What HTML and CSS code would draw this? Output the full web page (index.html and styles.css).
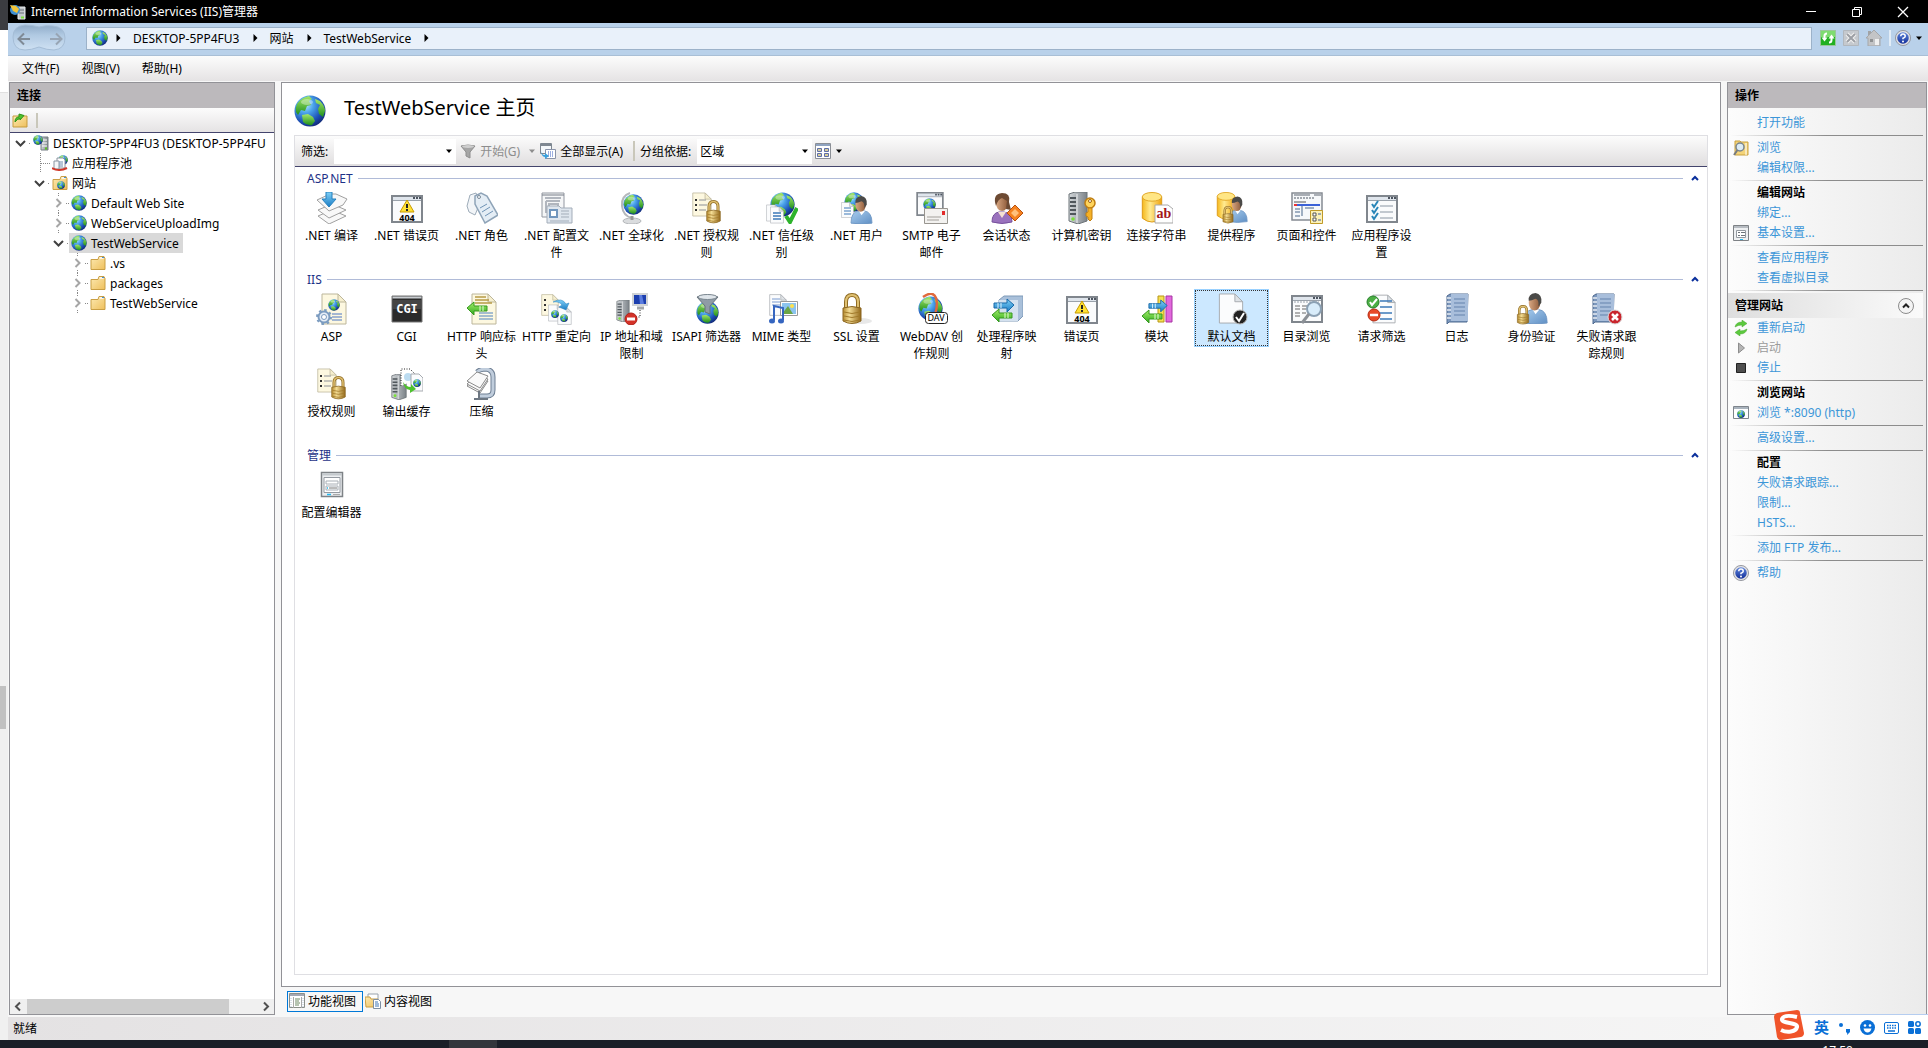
FILE: index.html
```
<!DOCTYPE html>
<html lang="zh-CN">
<head>
    <meta charset="utf-8">
    <meta name="viewport" content="width=device-width, initial-scale=1.0">
    <title>Internet Information Services (IIS)管理器</title>
    <link rel="stylesheet" href="styles.css">
</head>
<body>
    <!-- 图标库 -->
    <svg class="sprite" width="0" height="0" aria-hidden="true">
        <defs>
            <radialGradient id="gGlobe" cx="0.35" cy="0.3" r="0.75"><stop offset="0" stop-color="#b5e8ff"/><stop offset="0.35" stop-color="#4aa3ea"/><stop offset="0.75" stop-color="#1c4fb4"/><stop offset="1" stop-color="#122a78"/></radialGradient>
            <linearGradient id="gLand" x1="0" y1="0" x2="0" y2="1"><stop offset="0" stop-color="#a5e86a"/><stop offset="1" stop-color="#1f8f1c"/></linearGradient>
            <linearGradient id="gGold" x1="0" y1="0" x2="1" y2="0"><stop offset="0" stop-color="#b58a2e"/><stop offset="0.35" stop-color="#f3dc94"/><stop offset="1" stop-color="#94691a"/></linearGradient>
            <linearGradient id="gYellow" x1="0" y1="0" x2="1" y2="0"><stop offset="0" stop-color="#f5b81c"/><stop offset="0.4" stop-color="#ffeb92"/><stop offset="1" stop-color="#f0a30c"/></linearGradient>
            <linearGradient id="gGray" x1="0" y1="0" x2="1" y2="0"><stop offset="0" stop-color="#d3d7da"/><stop offset="1" stop-color="#7b8288"/></linearGradient>
            <linearGradient id="gBlue" x1="0" y1="0" x2="0" y2="1"><stop offset="0" stop-color="#7fd0f7"/><stop offset="1" stop-color="#1a7cc4"/></linearGradient>
            <linearGradient id="gGreen" x1="0" y1="0" x2="0" y2="1"><stop offset="0" stop-color="#a6ef6a"/><stop offset="1" stop-color="#2fa91e"/></linearGradient>
            <linearGradient id="gFolder" x1="0" y1="0" x2="1" y2="1"><stop offset="0" stop-color="#fdeab2"/><stop offset="1" stop-color="#eebf5c"/></linearGradient>
            <linearGradient id="gBody" x1="0" y1="0" x2="1" y2="1"><stop offset="0" stop-color="#a9cdee"/><stop offset="1" stop-color="#5f8fc4"/></linearGradient>
            <linearGradient id="gHead" x1="0" y1="0" x2="1" y2="0"><stop offset="0" stop-color="#d9a883"/><stop offset="1" stop-color="#8d5a39"/></linearGradient>
            <linearGradient id="gPad" x1="0" y1="0" x2="0" y2="1"><stop offset="0" stop-color="#8fabc8"/><stop offset="0.4" stop-color="#b0c9e2"/><stop offset="1" stop-color="#cfe1f3"/></linearGradient>
            <linearGradient id="gHelp" x1="0" y1="0" x2="0" y2="1"><stop offset="0" stop-color="#5f86dc"/><stop offset="1" stop-color="#132f9a"/></linearGradient>
        </defs>

        <!-- 基础图形 -->
        <symbol id="globe" viewBox="0 0 32 32">
            <circle cx="16" cy="16" r="15.5" fill="url(#gGlobe)"/>
            <path d="M3 9Q8 2 15 1l3 3-3 2 2 4-4 1-2 5-4-1-3 5-2-3q-1-4 1-8z" fill="url(#gLand)"/>
            <path d="M21 4l5 2q5 5 5 10l-2 6-4-3-1-5 2-4-4-2z" fill="url(#gLand)"/>
            <path d="M8 20l6-1 5 3 2 4-3 4q-5 1-9-3z" fill="url(#gLand)"/>
            <ellipse cx="13" cy="7" rx="6" ry="3" fill="#fff" opacity=".35"/>
        </symbol>
        <symbol id="doc" viewBox="0 0 26 32">
            <path d="M1 1h16l8 8v22H1z" fill="#fbfcfd" stroke="#a7abb0"/>
            <path d="M17 1v8h8z" fill="#dfe3e7" stroke="#a7abb0"/>
        </symbol>
        <symbol id="note" viewBox="0 0 26 32">
            <path d="M1 1h16l8 8v22H1z" fill="#fdf8e0" stroke="#bcb69b"/>
            <path d="M17 1v8h8z" fill="#f6efcf" stroke="#bcb69b"/>
        </symbol>
        <symbol id="lock" viewBox="0 0 20 32">
            <path d="M4 17V9q0-7 6-7t6 7v8" fill="none" stroke="#8f6b22" stroke-width="4"/>
            <path d="M4 17V9q0-7 6-7t6 7v8" fill="none" stroke="#dfc071" stroke-width="2"/>
            <path d="M1 15q9-3 18 0v13q-9 5-18 0z" fill="url(#gGold)" stroke="#8a6520"/>
            <path d="M2 19q8 3 16 0M2 23q8 3 16 0M2 27q8 3 16 0" fill="none" stroke="#a17a2b"/>
        </symbol>
        <symbol id="server" viewBox="0 0 20 32">
            <path d="M1 2l6-2h12v29l-9 3-9-3z" fill="url(#gGray)" stroke="#6d7478"/>
            <path d="M9 2v29" stroke="#eef0f1"/>
            <path d="M2 6h6M2 10h6M2 14h6M2 18h6M2 22h6" stroke="#50575c" stroke-width="2"/>
            <circle cx="5" cy="27" r="1.8" fill="#7be03a"/>
        </symbol>
        <symbol id="user" viewBox="0 0 26 32">
            <path d="M1 31q0-13 9-14h6q9 1 9 14-12 2-24 0z" fill="url(#gBody)" stroke="#6f97c4"/>
            <path d="M10 17l3 5 4-5z" fill="#fff"/>
            <ellipse cx="12" cy="10" rx="6" ry="8" fill="url(#gHead)"/>
            <path d="M6 8q-1-7 7-8 7 1 6 10l-3 4q1-7-3-8-4 2-7 2z" fill="#4b4a48"/>
        </symbol>
        <symbol id="win" viewBox="0 0 32 28">
            <path d="M1 1h30v26H1z" fill="#fafbfc" stroke="#80868d" stroke-width="2"/>
            <path d="M2 2h28v3H2z" fill="#dfe5ec"/>
            <path d="M2 5.500h28" stroke="#9aa2ab"/>
            <path d="M22 3h2M25 3h2M28 3h2" stroke="#4d5560" stroke-width="2"/>
        </symbol>
        <symbol id="cyl" viewBox="0 0 22 32">
            <path d="M1 5v22q10 8 20 0V5z" fill="url(#gYellow)" stroke="#dd9a16"/>
            <ellipse cx="11" cy="5" rx="10" ry="4.500" fill="#ffe685" stroke="#e0a524"/>
        </symbol>
        <symbol id="larrow" viewBox="0 0 22 14"><path d="M1 7l7-6v4h13v5H8v4z" fill="url(#gGreen)" stroke="#36991f"/><path d="M14 5v5M17 5v5" stroke="#e6ffd8"/></symbol>
        <symbol id="rarrow" viewBox="0 0 22 14"><path d="M21 7l-7-6v4H1v5h13v4z" fill="url(#gBlue)" stroke="#1769a8"/><path d="M5 5v5M8 5v5" stroke="#e2f4ff"/></symbol>
        <symbol id="folder" viewBox="0 0 16 16">
            <path d="M1 4.500h7l1-3h5l1 2v11H1z" fill="url(#gFolder)" stroke="#c99f45"/>
            <path d="M9.500 3h4" stroke="#fff" stroke-width="1.500"/><path d="M12 2.500h2" stroke="#3f8fd8"/>
        </symbol>
        <symbol id="help" viewBox="0 0 18 18">
            <circle cx="9" cy="9" r="8.500" fill="#e1e1e4" stroke="#8d8f98"/>
            <circle cx="9" cy="9" r="6.500" fill="url(#gHelp)"/>
            <path d="M6.500 7q0-2.500 2.500-2.500T11.500 7Q11.500 8.200 9 9.300V10.500" fill="none" stroke="#fff" stroke-width="1.700"/><circle cx="9" cy="13" r="1.100" fill="#fff"/>
        </symbol>
        <symbol id="caret" viewBox="0 0 8 8"><path d="M1 2.500h6L4 6z" fill="currentColor"/></symbol>
        <symbol id="next" viewBox="0 0 8 8"><path d="M2.500 0v8L6.500 4z" fill="#000"/></symbol>
        <symbol id="up" viewBox="0 0 8 8"><path d="M1 6l3-3 3 3" fill="none" stroke="#0a2f9c" stroke-width="2"/></symbol>

        <!-- 树节点 -->
        <symbol id="tw-open" viewBox="0 0 21 20"><path d="M6 8l4.500 4.500L15 8" fill="none" stroke="#404040" stroke-width="2"/><path d="M19 10.500h2" stroke="#888" stroke-dasharray="1 1"/></symbol>
        <symbol id="tw-closed" viewBox="0 0 21 20"><path d="M8.500 6l4 4-4 4" fill="none" stroke="#a6a6a6" stroke-width="2"/><path d="M10.500 0v3M10.500 17v3M18 10.500h3" stroke="#888" stroke-dasharray="1 1"/></symbol>
        <symbol id="tw-leaf" viewBox="0 0 21 20"><path d="M11.500 0v20M12 10.500h9" stroke="#888" stroke-dasharray="1 1"/></symbol>

        <!-- 16px 图标 -->
        <symbol id="s-server" viewBox="0 0 16 16"><path d="M8 2h7v13H8z" fill="url(#gGray)" stroke="#777f84"/><path d="M9 5h5M9 8h5M9 11h5" stroke="#fff"/><path d="M12 13.500h2" stroke="#58c322" stroke-width="2"/><use href="#globe" x="0" y="0" width="10" height="10"/></symbol>
        <symbol id="s-iis" viewBox="0 0 16 16"><path d="M8 3h7v12H8z" fill="#c3c8cb" stroke="#e9ecee"/><path d="M9 6h5M9 9h5" stroke="#687076"/><path d="M11 13.500h3" stroke="#7be03a" stroke-width="2"/><circle cx="5" cy="6" r="5" fill="#3f8fd2"/><path d="M0 1l6 1 3 3-2 4-4-2z" fill="#f2c53b"/></symbol>
        <symbol id="s-pool" viewBox="0 0 16 16"><use href="#globe" x="6" y="0" width="10" height="10"/><path d="M5 3h6l2 2v8H5z" fill="#fff" stroke="#8a94a0"/><path d="M2 6h5v8H2z" fill="#f4f6f8" stroke="#8a94a0"/><path d="M7 7h4M7 9h4M7 11h4" stroke="#6d8cae"/><path d="M0 13q7 4 15 0" fill="none" stroke="#d0392b" stroke-width="2"/></symbol>
        <symbol id="s-sites" viewBox="0 0 16 16"><use href="#folder" width="16" height="16"/><use href="#globe" x="5" y="6" width="8" height="8"/></symbol>
        <symbol id="s-conn" viewBox="0 0 16 16"><path d="M1 4h14v11H1z" fill="url(#gFolder)" stroke="#c59b3f"/><path d="M3 10q0-5 4-5V2l5 1.500L8 8V6.500Q5 7 3 10z" fill="#4fc22e" stroke="#2e9417"/></symbol>
        <symbol id="s-filter" viewBox="0 0 16 16"><path d="M1 3q7-2 14 0L10 9v6l-4-2V9z" fill="#a5a5a5" stroke="#8d8d8d"/><ellipse cx="8" cy="3.500" rx="6" ry="1.500" fill="#cfcfcf"/></symbol>
        <symbol id="s-all" viewBox="0 0 16 16"><path d="M.5.500h11v10H.5z" fill="#f4f7fa" stroke="#7e8791"/><path d="M1 2h10" stroke="#7e8791" stroke-width="2"/><path d="M5.500 6.500h10v9h-10z" fill="#fff" stroke="#8a93a8"/><path d="M8 9h6M8 11h6M8 13h6" stroke="#3b5fc2" stroke-dasharray="1 1"/><path d="M1 7q0 5 4 5v-2l4 3-4 3v-2q-4 0-4-7z" fill="#3aa0dc"/></symbol>
        <symbol id="s-view" viewBox="0 0 16 16"><path d="M.5.500h15v15H.5z" fill="#fff" stroke="#8b8f96"/><path d="M1 2h14" stroke="#8fa3c0" stroke-width="2"/><path d="M2.500 5.500h4v3h-4zM9.500 5.500h4v3h-4zM2.500 10.500h4v3h-4zM9.500 10.500h4v3h-4z" fill="#d8cf9a" stroke="#5e6ea8"/></symbol>
        <symbol id="s-refresh" viewBox="0 0 16 16"><path d="M.5.500h15v15H.5z" fill="#22b022" stroke="#9ac79a"/><path d="M1 1h14v6H1z" fill="#7fdc71"/><path d="M7 3.500Q4.500 3.500 4.500 6v2M9 12.500q2.500 0 2.500-2.500V8" fill="none" stroke="#fff" stroke-width="2"/><path d="M1.500 7.500h6l-3 4zM8.500 8.500h6l-3-4z" fill="#fff"/></symbol>
        <symbol id="s-stop" viewBox="0 0 16 16"><path d="M.5.500h15v15H.5z" fill="#c5c9ce" stroke="#b2b7bd"/><path d="M4 4l8 8M12 4l-8 8" stroke="#f1f1f1" stroke-width="4"/><path d="M4 4l8 8M12 4l-8 8" stroke="#9c9fa5" stroke-width="2"/></symbol>
        <symbol id="s-home" viewBox="0 0 16 16"><path d="M2 1h3v5H2z" fill="#a1a3a5"/><path d="M8 0l8 8h-2v8H2V8H0z" fill="#c3c4c6" stroke="#a5a7aa"/><path d="M9 9h4v6H9z" fill="#f0f0f0"/><path d="M4 9h3v3H4z" fill="#8e9092"/></symbol>
        <symbol id="s-browse" viewBox="0 0 16 16"><path d="M2 1h5l1 1h7v13H2z" fill="#f4d479" stroke="#c9a13f"/><path d="M13 3v12" stroke="#fff"/><circle cx="7" cy="7" r="4" fill="#dcecf5" stroke="#7a858d" stroke-width="1.500"/><path d="M4.500 10L1 15" stroke="#767b80" stroke-width="2"/></symbol>
        <symbol id="s-basic" viewBox="0 0 16 16"><path d="M.5.500h15v15H.5z" fill="#eef0f2" stroke="#7e8286"/><path d="M1 2h14" stroke="#b7bcc2" stroke-width="2"/><path d="M3.500 5.500h9v7h-9z" fill="#fff" stroke="#949aa1"/><path d="M5 7.500h2M5 10.500h2M8 7.500h4M8 10.500h4" stroke="#6d747b"/><path d="M7 14.500h3" stroke="#22b9f0"/></symbol>
        <symbol id="s-restart" viewBox="0 0 16 16"><path d="M2 7q1-5 7-5V0l5 3.500L9 7V5Q5 5 2 7zM14 9q-1 5-7 5v2l-5-3.500L7 9v2q4 0 7-2z" fill="#5cc93e" stroke="#48a92e" stroke-width=".5"/></symbol>
        <symbol id="s-play" viewBox="0 0 16 16"><path d="M5.500 3l6 5-6 5z" fill="#b5b5b5" stroke="#8d8d8d"/></symbol>
        <symbol id="s-square" viewBox="0 0 16 16"><path d="M3.500 3.500h9v9h-9z" fill="#4e4e4e" stroke="#222"/></symbol>
        <symbol id="s-site" viewBox="0 0 16 16"><path d="M.5 1.500h15v12H.5z" fill="#fff" stroke="#7e858c"/><path d="M1 3h14" stroke="#a9b3bd" stroke-width="2"/><use href="#globe" x="4" y="5" width="8" height="8"/></symbol>
        <symbol id="s-feat" viewBox="0 0 16 16"><path d="M.5.500h15v14H.5z" fill="#fff" stroke="#8a8f8a"/><path d="M1 2h14" stroke="#a4a8b3" stroke-width="2"/><path d="M4.500 4v11M12.500 4v11" stroke="#a9a9a9"/><path d="M6 6h5M6 8h4M6 10h5M6 12h4" stroke="#6e8a64"/><path d="M2 5v9M14 5v9" stroke="#b5c4d8" stroke-dasharray="1 1"/></symbol>
        <symbol id="s-cont" viewBox="0 0 16 16"><path d="M3 1h10v8H3z" fill="#fff" stroke="#98a2ad"/><path d="M0 4h5l1 2h7v8H1z" fill="url(#gFolder)" stroke="#c99f45"/><path d="M8.500 6.500h5l2 2v7h-7z" fill="#fff" stroke="#7e8fa3"/><path d="M10 9h3M10 11h4M10 13h4" stroke="#3f77b8"/></symbol>

        <!-- 功能图标 -->
        <symbol id="i-compile" viewBox="0 0 32 32"><g fill="#f8f8f8" stroke="#a0a0a0"><path d="M2 24l14-6 14 6-17 8z"/><path d="M2 18l14-6 14 6-17 8z"/><path d="M1 8l13-6h6l11 5-4 6-14 6z"/></g><path d="M10 0h6v7h4l-7 8-7-8h4z" fill="url(#gBlue)" stroke="#2580be"/></symbol>
        <symbol id="i-warn" viewBox="0 0 32 32"><use href="#win" x="0" y="3" width="32" height="28"/><path d="M16 8l7 12H9z" fill="#ffe135" stroke="#c79a00"/><path d="M16 12v4M16 17v2" stroke="#222" stroke-width="2"/></symbol>
        <symbol id="i-role" viewBox="0 0 32 32"><path d="M4 3l6-2 4 10-5 12-6-3-2-6z" fill="#f2f5f8" stroke="#9eacb9"/><path d="M9 4l6-3 6 3 11 19-13 8L9 12z" fill="#e4edf5" stroke="#8fa4b8" stroke-width="1.500"/><circle cx="13" cy="5" r="1.500" fill="#fff" stroke="#7a8a99"/><path d="M14 16l7-4M16 20l8-5M19 24l8-5" stroke="#6f93b5"/></symbol>
        <symbol id="i-config" viewBox="0 0 32 32"><path d="M1 1h22v24H1z" fill="#f5f6f7" stroke="#9297a0"/><path d="M1 3h22" stroke="#777d87"/><path d="M4 6h16M5 9h14M5 9v12M8 12h9v9H8z" fill="none" stroke="#b1b6be" stroke-width="2"/><path d="M6 14h12l2 2h11v15H6z" fill="#dfe6ee" stroke="#a3adb9"/><path d="M9 18h7v7H9z" fill="#fff" stroke="#7196bd" stroke-width="2"/><path d="M20 19h8M20 22h8M20 25h8M9 29h19" stroke="#a3adb9"/></symbol>
        <symbol id="i-intl" viewBox="0 0 32 32"><path d="M14 1Q5 4 6 14t10 12" fill="none" stroke="#b5b8bb" stroke-width="2"/><ellipse cx="16" cy="29" rx="9" ry="3" fill="#dadcde" stroke="#b4b7ba"/><path d="M16 24v4" stroke="#999" stroke-width="3"/><use href="#globe" x="7" y="2" width="21" height="21"/></symbol>
        <symbol id="i-auth" viewBox="0 0 32 32"><use href="#note" x="1" y="0" width="20" height="25"/><path d="M4 8h2M4 13h2M4 18h2" stroke="#333" stroke-width="2"/><path d="M8 8h7M8 13h8M8 18h7" stroke="#8d9096"/><use href="#lock" x="15" y="8" width="15" height="24"/></symbol>
        <symbol id="i-trust" viewBox="0 0 32 32"><use href="#globe" x="4" y="0" width="25" height="25"/><use href="#doc" x="0" y="12" width="14" height="18"/><use href="#doc" x="4" y="14" width="14" height="18"/><path d="M7 21h8M7 24h8M7 27h8" stroke="#3d78b8" stroke-width="1.500"/><path d="M20 24l4 6 7-14" fill="none" stroke="#2db32b" stroke-width="4"/></symbol>
        <symbol id="i-netuser" viewBox="0 0 32 32"><use href="#globe" x="3" y="0" width="20" height="20"/><use href="#doc" x="0" y="9" width="13" height="18"/><path d="M3 16h7M3 19h7M3 22h7" stroke="#3d78b8"/><use href="#user" x="9" y="4" width="23" height="28"/></symbol>
        <symbol id="i-smtp" viewBox="0 0 32 32"><use href="#win" x="0" y="0" width="28" height="24"/><use href="#globe" x="7" y="6" width="13" height="13"/><path d="M8.500 16.500h23v15h-23z" fill="#f3f2f0" stroke="#98958f"/><path d="M26 19h3v4h-3z" fill="#e22b2b"/><path d="M11 25h14M11 28h12" stroke="#a3a09b"/></symbol>
        <symbol id="i-session" viewBox="0 0 32 32"><path d="M1 30q0-9 7-10h5q8 1 8 10-10 3-20 0z" fill="#9a72bd" stroke="#77519c"/><path d="M7 20l4 6 4-6z" fill="#f5e1d2"/><ellipse cx="11" cy="11" rx="6" ry="8" fill="url(#gHead)"/><path d="M5 14Q1 2 11 1q9 0 7 9l2 8-5-1 1-8-5-3q-4 1-6 8z" fill="#6d4a33"/><path d="M24 13l8 8-8 8-8-8z" fill="#f58220" stroke="#b9500c"/><path d="M24 17l4 4-4 4-4-4z" fill="#ffc17c"/></symbol>
        <symbol id="i-key" viewBox="0 0 32 32"><use href="#server" x="2" y="0" width="20" height="32"/><circle cx="24" cy="11" r="5" fill="#ffd45c" stroke="#c07e12" stroke-width="1.500"/><circle cx="24" cy="9" r="1.500" fill="#fff" stroke="#9d6410"/><path d="M22 16h4v11l-2 2-2-2v-2l-2-1v-3l2-1z" fill="#f5b126" stroke="#c07e12"/></symbol>
        <symbol id="i-provider" viewBox="0 0 32 32"><use href="#cyl" x="0" y="0" width="20" height="28"/><use href="#user" x="11" y="4" width="21" height="27"/><use href="#lock" x="6" y="14" width="12" height="18"/></symbol>
        <symbol id="i-pages" viewBox="0 0 32 32"><path d="M1 1h30v27H1z" fill="#f6f8fa" stroke="#858b93" stroke-width="1.500"/><path d="M3 3h16M23 3h7" stroke="#5c6470"/><path d="M3 6h20" stroke="#a3a9b0" stroke-dasharray="2 1" stroke-width="2"/><path d="M3 10h12" stroke="#555"/><path d="M3 13h26" stroke="#3b62d8" stroke-width="2"/><path d="M3 13h3" stroke="#e33" stroke-width="2"/><path d="M4 17h5M4 20h5M4 24h5M11 14v10M14 16h9" stroke="#8296b0" stroke-width="1.500"/><path d="M19.500 18.500h12v13h-12z" fill="#fbf1b8" stroke="#c09a28"/><path d="M22 21h3v3h-3zM22 26h3v3h-3z" fill="#fff" stroke="#555"/><path d="M27 22h3M27 28h3" stroke="#3f5b9c"/></symbol>
        <symbol id="i-appset" viewBox="0 0 32 32"><use href="#win" x="0" y="3" width="32" height="28"/><g fill="none" stroke="#2b86b8" stroke-width="2"><path d="M6 12l2 3 4-6M6 18l2 3 4-6M6 24l2 3 4-6"/></g><path d="M14 14h13M14 20h13M14 26h13" stroke="#8a96a3"/></symbol>
        <symbol id="i-asp" viewBox="0 0 32 32"><use href="#note" x="5" y="0" width="26" height="32"/><use href="#globe" x="12" y="6" width="12" height="12"/><path d="M16 21h10M16 24h10M16 27h10" stroke="#4d77c4"/><circle cx="8" cy="24" r="5.500" fill="#e6eef7" stroke="#7c9cc0" stroke-width="2"/><circle cx="8" cy="24" r="7" fill="none" stroke="#7c9cc0" stroke-width="2" stroke-dasharray="2.500 3"/><circle cx="8" cy="24" r="2.500" fill="#fff" stroke="#7c9cc0"/></symbol>
        <symbol id="i-header" viewBox="0 0 32 32"><use href="#note" x="5" y="0" width="26" height="32"/><path d="M9 4h11M9 7h14M9 10h17" stroke="#b79b45" stroke-width="1.500"/><path d="M13 20h14M13 23h14M13 26h14" stroke="#4f82c0"/><use href="#larrow" x="0" y="8" width="22" height="14"/></symbol>
        <symbol id="i-redirect" viewBox="0 0 32 32"><use href="#note" x="0" y="0" width="18" height="24"/><path d="M3 7h2M3 12h2M3 17h2" stroke="#333" stroke-width="2"/><use href="#doc" x="7" y="11" width="14" height="18"/><use href="#doc" x="16" y="14" width="15" height="18"/><use href="#globe" x="10" y="17" width="8" height="8"/><use href="#globe" x="19" y="21" width="8" height="8"/><path d="M12 9q9-5 13 2l3-1-3 7-7-3 3-2q-3-4-9-3z" fill="url(#gBlue)" stroke="#2580be" stroke-width=".5"/></symbol>
        <symbol id="i-ip" viewBox="0 0 32 32"><use href="#server" x="0" y="7" width="14" height="22"/><path d="M17 1h14v11H17z" fill="#1c3fae" stroke="#d0d3d6" stroke-width="2"/><path d="M23 2h3l2 9h-4z" fill="#5a7cdf"/><path d="M21 15h7" stroke="#a2a6aa" stroke-width="3"/><path d="M24 17v7h-5" fill="none" stroke="#222" stroke-dasharray="1 1.500"/><circle cx="15" cy="26" r="6" fill="#d43228" stroke="#b01f18"/><path d="M11 26h8" stroke="#fff" stroke-width="3"/></symbol>
        <symbol id="i-isapi" viewBox="0 0 32 32"><use href="#globe" x="5" y="8" width="23" height="23"/><path d="M6 4q10-4 21 0l-8 9v8l-5-2v-6z" fill="#8f9ba5" stroke="#66717a"/><ellipse cx="16.500" cy="4" rx="9.500" ry="2.500" fill="#dfe5ea" stroke="#7b8790"/></symbol>
        <symbol id="i-mime" viewBox="0 0 32 32"><use href="#doc" x="3" y="0" width="18" height="24"/><path d="M6 6h8M6 9h10M6 12h10" stroke="#7b9bd0"/><path d="M14.500 8.500h17v14h-17z" fill="#fff" stroke="#999"/><path d="M16 10h14v11H16z" fill="#8cc4ee"/><path d="M16 21l6-8 5 8z" fill="#6ba545"/><circle cx="26" cy="13" r="2" fill="#ffe14a"/><path d="M8 27V13l9 2v12" fill="none" stroke="#3565c0" stroke-width="2"/><ellipse cx="6" cy="28" rx="3" ry="2.500" fill="#3565c0"/><ellipse cx="15" cy="28" rx="3" ry="2.500" fill="#3565c0"/></symbol>
        <symbol id="i-ssl" viewBox="0 0 32 32"><ellipse cx="20" cy="28" rx="11" ry="3" fill="#e8e8e8"/><use href="#lock" x="1" y="0" width="20" height="32"/></symbol>
        <symbol id="i-handler" viewBox="0 0 32 32"><path d="M8 7l5-4h19v20l-5 5H8z" fill="#a9c0da" stroke="#7f9ab8"/><path d="M8 7h19v21H8z" fill="#d4e1ef"/><use href="#rarrow" x="2" y="5" width="22" height="14"/><use href="#larrow" x="0" y="15" width="22" height="14"/></symbol>
        <symbol id="i-module" viewBox="0 0 32 32"><path d="M17 3h6v26h-6z" fill="#f6df52" stroke="#b69717"/><path d="M25 3h6v26h-6z" fill="#e268dd" stroke="#a734a3"/><use href="#rarrow" x="7" y="6" width="20" height="13"/><use href="#larrow" x="0" y="16" width="22" height="14"/></symbol>
        <symbol id="i-default" viewBox="0 0 32 32"><use href="#doc" x="2" y="0" width="26" height="31"/><circle cx="24" cy="24" r="7" fill="#222" stroke="#b8b8b8"/><path d="M20 24l3 4 5-8" fill="none" stroke="#fff" stroke-width="2"/></symbol>
        <symbol id="i-browse" viewBox="0 0 32 32"><use href="#win" x="0" y="2" width="32" height="28"/><path d="M3 9h25" stroke="#9aa2ab" stroke-dasharray="2 1"/><path d="M4 13h5M4 16h5M4 20h5M4 23h5M11 13h5M11 16h4M11 20h4" stroke="#666"/><circle cx="23" cy="16" r="7" fill="#d8ecfa" stroke="#8ba0b3" stroke-width="2"/><path d="M18 21l-7 9" stroke="#8b9096" stroke-width="3"/></symbol>
        <symbol id="i-request" viewBox="0 0 32 32"><use href="#doc" x="6" y="1" width="24" height="30"/><path d="M14 8h12M14 14h12M14 20h12M14 26h12" stroke="#3d78b8" stroke-width="1.500"/><circle cx="7" cy="9" r="6" fill="#4caf45" stroke="#26802a"/><path d="M4 9l2 3 5-6" fill="none" stroke="#fff" stroke-width="2"/><circle cx="8" cy="22" r="6" fill="#e84a28" stroke="#b52a12"/><path d="M4 22h8" stroke="#fff" stroke-width="2.500"/></symbol>
        <symbol id="i-log" viewBox="0 0 32 32"><path d="M6 3l3-2h18l-1 28H8l-2 2z" fill="#7b97bd" stroke="#4f6a90"/><path d="M10 1h17v27H10z" fill="#a8bedb"/><path d="M13 6h11M13 10h11M13 14h11M13 18h11M13 22h11" stroke="#6583ad"/><path d="M6 5h4M6 9h4M6 13h4M6 17h4M6 21h4M6 25h4" stroke="#e6ebf2" stroke-width="1.500"/></symbol>
        <symbol id="i-ident" viewBox="0 0 32 32"><use href="#user" x="6" y="0" width="27" height="31"/><use href="#lock" x="0" y="12" width="14" height="20"/></symbol>
        <symbol id="i-fail" viewBox="0 0 32 32"><use href="#i-log" x="-4" y="0" width="32" height="32"/><circle cx="24" cy="24" r="7" fill="#c9252d" stroke="#dcdcdc"/><path d="M21 21l6 6M27 21l-6 6" stroke="#fff" stroke-width="2.500"/></symbol>
        <symbol id="i-cache" viewBox="0 0 32 32"><use href="#server" x="0" y="6" width="16" height="26"/><path d="M10 18V1h9l5 5v6" fill="#fff" stroke="#222" stroke-dasharray="1 1.500"/><circle cx="17" cy="9" r="4" fill="#bcdcf1"/><path d="M20 6h8l4 4v13H20z" fill="#fbfcfd" stroke="#a7abb0"/><use href="#globe" x="22" y="11" width="8" height="8"/><path d="M12 14q3 5 8 5v-3l5 5-6 4v-3q-6-1-7-8z" fill="#4fc22e"/></symbol>
        <symbol id="i-zip" viewBox="0 0 32 32"><path d="M11 4q3-3 9-3 7 1 7 8v13q0 6-6 6h-8" fill="none" stroke="#6e7f93" stroke-width="5"/><path d="M11 4q3-3 9-3 7 1 7 8v13q0 6-6 6h-8" fill="none" stroke="#c0cddc" stroke-width="3"/><g fill="#fafafa" stroke="#8a8a8a"><path d="M1 18l10-9 11 4-8 12z"/><path d="M1 16l10-9 11 4-8 12z"/><path d="M1 13l10-9 11 4-8 12z"/></g><path d="M13 23v8M8 31h14" stroke="#6d7782" stroke-width="2"/></symbol>
        <symbol id="i-editor" viewBox="0 0 32 32"><path d="M5.500 3.500h21v24h-21z" fill="#eceef0" stroke="#7e8286" stroke-width="1.500"/><path d="M6 5.500h20" stroke="#c3c8cc" stroke-width="2"/><path d="M8 8.500h16v15H8z" fill="#fff" stroke="#949aa1"/><path d="M10 12h12v3H10zM10 17h12v4H10z" fill="#fff" stroke="#a8aeb5"/><path d="M13 19h8" stroke="#777"/><path d="M11 19h1M11 25.500h4" stroke="#22b9f0" stroke-width="1.500"/><path d="M17 25.500h7" stroke="#aaa"/></symbol>
    </svg>

    <div class="screen">
        <div class="edge" aria-hidden="true">
            <div class="edge-dark"></div>
            <div class="edge-light"></div>
            <div class="edge-track"><div class="edge-thumb"></div></div>
        </div>

        <div class="app">
            <header class="titlebar">
                <svg class="ico16"><use href="#s-iis"/></svg>
                <h1>Internet Information Services (IIS)管理器</h1>
                <button type="button" class="win-btn" aria-label="最小化"><svg width="12" height="12"><path d="M1 5.500h10" stroke="#fff"/></svg></button>
                <button type="button" class="win-btn" aria-label="还原"><svg width="12" height="12"><path d="M1.500 3.500h7v7h-7zM3.500 3V1.500h7v7H9" fill="none" stroke="#fff"/></svg></button>
                <button type="button" class="win-btn" aria-label="关闭"><svg width="12" height="12"><path d="M1 1l10 10M11 1L1 11" stroke="#fff" stroke-width="1.300"/></svg></button>
            </header>

            <nav class="navbar">
                <button type="button" class="backfwd" aria-label="后退和前进">
                    <svg width="54" height="28" viewBox="0 0 54 28">
                        <path d="M13 1q7 0 14 2 7-2 14-1 12 1 12 12 0 11-11 12-7 0-15-3-8 3-14 3Q1 26 1 13 1 2 13 1z" fill="url(#gPad)" stroke="#a5bdd6"/>
                        <path d="M18 15H7M12 9.500L6.500 15l5.500 5.500" fill="none" stroke="#7f8a96" stroke-width="2"/>
                        <path d="M38 15h11M44 9.500l5.500 5.500-5.500 5.500" fill="none" stroke="#98a5b4" stroke-width="2"/>
                    </svg>
                </button>
                <div class="crumbs">
                    <svg class="ico16"><use href="#globe"/></svg>
                    <svg class="ico8"><use href="#next"/></svg>
                    <a href="#">DESKTOP-5PP4FU3</a>
                    <svg class="ico8"><use href="#next"/></svg>
                    <a href="#">网站</a>
                    <svg class="ico8"><use href="#next"/></svg>
                    <a href="#">TestWebService</a>
                    <svg class="ico8"><use href="#next"/></svg>
                </div>
                <div class="nav-tools">
                    <button type="button" aria-label="刷新"><svg class="ico16"><use href="#s-refresh"/></svg></button>
                    <button type="button" aria-label="停止"><svg class="ico16"><use href="#s-stop"/></svg></button>
                    <button type="button" aria-label="主页"><svg class="ico16"><use href="#s-home"/></svg></button>
                    <button type="button" class="nav-help" aria-label="帮助"><svg class="ico16"><use href="#help"/></svg><svg class="ico8"><use href="#caret"/></svg></button>
                </div>
            </nav>

            <div class="menubar">
                <button type="button">文件(F)</button>
                <button type="button">视图(V)</button>
                <button type="button">帮助(H)</button>
            </div>

            <main class="work">
                <!-- 连接 -->
                <section class="panel connections">
                    <h2 class="panel-title">连接</h2>
                    <div class="conn-tools">
                        <button type="button" aria-label="创建新的连接"><svg class="ico16"><use href="#s-conn"/></svg></button>
                        <span class="sep"></span>
                    </div>
                    <ul class="tree">
                        <li>
                            <div class="node"><button type="button" class="twisty" aria-label="折叠"><svg><use href="#tw-open"/></svg></button><button type="button" class="label"><svg class="ico16"><use href="#s-server"/></svg>DESKTOP-5PP4FU3 (DESKTOP-5PP4FU</button></div>
                            <ul>
                                <li><div class="node"><span class="twisty"><svg><use href="#tw-leaf"/></svg></span><button type="button" class="label"><svg class="ico16"><use href="#s-pool"/></svg>应用程序池</button></div></li>
                                <li>
                                    <div class="node"><button type="button" class="twisty" aria-label="折叠"><svg><use href="#tw-open"/></svg></button><button type="button" class="label"><svg class="ico16"><use href="#s-sites"/></svg>网站</button></div>
                                    <ul>
                                        <li><div class="node"><button type="button" class="twisty" aria-label="展开"><svg><use href="#tw-closed"/></svg></button><button type="button" class="label"><svg class="ico16"><use href="#globe"/></svg>Default Web Site</button></div></li>
                                        <li><div class="node"><button type="button" class="twisty" aria-label="展开"><svg><use href="#tw-closed"/></svg></button><button type="button" class="label"><svg class="ico16"><use href="#globe"/></svg>WebServiceUploadImg</button></div></li>
                                        <li>
                                            <div class="node"><button type="button" class="twisty" aria-label="折叠"><svg><use href="#tw-open"/></svg></button><button type="button" class="label selected"><svg class="ico16"><use href="#globe"/></svg>TestWebService</button></div>
                                            <ul>
                                                <li><div class="node"><button type="button" class="twisty" aria-label="展开"><svg><use href="#tw-closed"/></svg></button><button type="button" class="label"><svg class="ico16"><use href="#folder"/></svg>.vs</button></div></li>
                                                <li><div class="node"><button type="button" class="twisty" aria-label="展开"><svg><use href="#tw-closed"/></svg></button><button type="button" class="label"><svg class="ico16"><use href="#folder"/></svg>packages</button></div></li>
                                                <li><div class="node"><button type="button" class="twisty" aria-label="展开"><svg><use href="#tw-closed"/></svg></button><button type="button" class="label"><svg class="ico16"><use href="#folder"/></svg>TestWebService</button></div></li>
                                            </ul>
                                        </li>
                                    </ul>
                                </li>
                            </ul>
                        </li>
                    </ul>
                    <div class="hscroll">
                        <button type="button" aria-label="向左滚动"><svg width="17" height="15"><path d="M10 3.500L6 7.500l4 4" fill="none" stroke="#505050" stroke-width="2"/></svg></button>
                        <div class="hscroll-track"><div class="hscroll-thumb"></div></div>
                        <button type="button" aria-label="向右滚动"><svg width="17" height="15"><path d="M7 3.500l4 4-4 4" fill="none" stroke="#505050" stroke-width="2"/></svg></button>
                    </div>
                </section>

                <!-- 功能视图 -->
                <section class="center">
                    <div class="panel home">
                        <div class="home-title">
                            <svg class="ico32"><use href="#globe"/></svg>
                            <h2>TestWebService 主页</h2>
                        </div>
                        <div class="features">
                            <div class="toolbar">
                                <label for="filter">筛选:</label>
                                <div class="combo combo-filter"><input type="text" id="filter"><svg class="ico8"><use href="#caret"/></svg></div>
                                <button type="button" class="go" disabled><svg class="ico16"><use href="#s-filter"/></svg>开始(G)<svg class="ico8"><use href="#caret"/></svg></button>
                                <button type="button" class="showall"><svg class="ico16"><use href="#s-all"/></svg>全部显示(A)</button>
                                <span class="sep"></span>
                                <label for="groupby">分组依据:</label>
                                <div class="combo combo-group"><select id="groupby"><option>区域</option><option>类别</option><option>不进行分组</option></select><svg class="ico8"><use href="#caret"/></svg></div>
                                <button type="button" class="viewmode" aria-label="视图"><svg class="ico16"><use href="#s-view"/></svg><svg class="ico8"><use href="#caret"/></svg></button>
                            </div>

                            <section class="group">
                                <h3>ASP.NET<button type="button" aria-label="折叠"><svg class="ico8"><use href="#up"/></svg></button></h3>
                                <div class="items">
                                    <button type="button" class="item"><svg class="ico32"><use href="#i-compile"/></svg>.NET 编译</button>
                                    <button type="button" class="item"><svg class="ico32"><use href="#i-warn"/><text x="16" y="29" class="t404">404</text></svg>.NET 错误页</button>
                                    <button type="button" class="item"><svg class="ico32"><use href="#i-role"/></svg>.NET 角色</button>
                                    <button type="button" class="item"><svg class="ico32"><use href="#i-config"/></svg>.NET 配置文件</button>
                                    <button type="button" class="item"><svg class="ico32"><use href="#i-intl"/></svg>.NET 全球化</button>
                                    <button type="button" class="item"><svg class="ico32"><use href="#i-auth"/></svg>.NET 授权规则</button>
                                    <button type="button" class="item"><svg class="ico32"><use href="#i-trust"/></svg>.NET 信任级别</button>
                                    <button type="button" class="item"><svg class="ico32"><use href="#i-netuser"/></svg>.NET 用户</button>
                                    <button type="button" class="item"><svg class="ico32"><use href="#i-smtp"/></svg>SMTP 电子<br>邮件</button>
                                    <button type="button" class="item"><svg class="ico32"><use href="#i-session"/></svg>会话状态</button>
                                    <button type="button" class="item"><svg class="ico32"><use href="#i-key"/></svg>计算机密钥</button>
                                    <button type="button" class="item"><svg class="ico32"><use href="#cyl" x="0" y="0" width="22" height="31"/><path d="M14 13h13l5 4v14H14z" fill="#fff" stroke="#a8a8a8"/><text x="23" y="26" class="tab-ab">ab</text></svg>连接字符串</button>
                                    <button type="button" class="item"><svg class="ico32"><use href="#i-provider"/></svg>提供程序</button>
                                    <button type="button" class="item"><svg class="ico32"><use href="#i-pages"/></svg>页面和控件</button>
                                    <button type="button" class="item"><svg class="ico32"><use href="#i-appset"/></svg>应用程序设<br>置</button>
                                </div>
                            </section>

                            <section class="group">
                                <h3>IIS<button type="button" aria-label="折叠"><svg class="ico8"><use href="#up"/></svg></button></h3>
                                <div class="items">
                                    <button type="button" class="item"><svg class="ico32"><use href="#i-asp"/></svg>ASP</button>
                                    <button type="button" class="item"><svg class="ico32"><path d="M1 3h30v26H1z" fill="#2b2b2b" stroke="#777"/><path d="M1.500 4.500h29" stroke="#c8ccd0" stroke-width="2"/><path d="M2 7h28v9H2z" fill="#454545"/><text x="16" y="20" class="tcgi">CGI</text></svg>CGI</button>
                                    <button type="button" class="item"><svg class="ico32"><use href="#i-header"/></svg>HTTP 响应标<br>头</button>
                                    <button type="button" class="item"><svg class="ico32"><use href="#i-redirect"/></svg>HTTP 重定向</button>
                                    <button type="button" class="item"><svg class="ico32"><use href="#i-ip"/></svg>IP 地址和域<br>限制</button>
                                    <button type="button" class="item"><svg class="ico32"><use href="#i-isapi"/></svg>ISAPI 筛选器</button>
                                    <button type="button" class="item"><svg class="ico32"><use href="#i-mime"/></svg>MIME 类型</button>
                                    <button type="button" class="item"><svg class="ico32"><use href="#i-ssl"/></svg>SSL 设置</button>
                                    <button type="button" class="item"><svg class="ico32"><use href="#globe" x="2" y="3" width="25" height="25"/><path d="M7 4Q17-3 20 5t-4 25" fill="none" stroke="#e06a3c" stroke-width="2.500"/><rect x="9.500" y="19.500" width="22" height="11" rx="3" fill="#fff" stroke="#222"/><text x="20" y="28" class="tdav">DAV</text></svg>WebDAV 创<br>作规则</button>
                                    <button type="button" class="item"><svg class="ico32"><use href="#i-handler"/></svg>处理程序映<br>射</button>
                                    <button type="button" class="item"><svg class="ico32"><use href="#i-warn"/><text x="16" y="29" class="t404">404</text></svg>错误页</button>
                                    <button type="button" class="item"><svg class="ico32"><use href="#i-module"/></svg>模块</button>
                                    <button type="button" class="item selected"><svg class="ico32"><use href="#i-default"/></svg>默认文档</button>
                                    <button type="button" class="item"><svg class="ico32"><use href="#i-browse"/></svg>目录浏览</button>
                                    <button type="button" class="item"><svg class="ico32"><use href="#i-request"/></svg>请求筛选</button>
                                    <button type="button" class="item"><svg class="ico32"><use href="#i-log"/></svg>日志</button>
                                    <button type="button" class="item"><svg class="ico32"><use href="#i-ident"/></svg>身份验证</button>
                                    <button type="button" class="item"><svg class="ico32"><use href="#i-fail"/></svg>失败请求跟<br>踪规则</button>
                                    <button type="button" class="item"><svg class="ico32"><use href="#i-auth"/></svg>授权规则</button>
                                    <button type="button" class="item"><svg class="ico32"><use href="#i-cache"/></svg>输出缓存</button>
                                    <button type="button" class="item"><svg class="ico32"><use href="#i-zip"/></svg>压缩</button>
                                </div>
                            </section>

                            <section class="group">
                                <h3>管理<button type="button" aria-label="折叠"><svg class="ico8"><use href="#up"/></svg></button></h3>
                                <div class="items">
                                    <button type="button" class="item"><svg class="ico32"><use href="#i-editor"/></svg>配置编辑器</button>
                                </div>
                            </section>
                        </div>
                    </div>
                    <div class="tabs">
                        <button type="button" class="tab active"><svg class="ico16"><use href="#s-feat"/></svg>功能视图</button>
                        <button type="button" class="tab"><svg class="ico16"><use href="#s-cont"/></svg>内容视图</button>
                    </div>
                </section>

                <!-- 操作 -->
                <aside class="panel actions">
                    <h2 class="panel-title">操作</h2>
                    <ul class="first">
                        <li><a href="#">打开功能</a></li>
                    </ul>
                    <ul>
                        <li><svg class="ico16"><use href="#s-browse"/></svg><a href="#">浏览</a></li>
                        <li><a href="#">编辑权限...</a></li>
                    </ul>
                    <ul>
                        <li><h4>编辑网站</h4></li>
                        <li><a href="#">绑定...</a></li>
                        <li><svg class="ico16"><use href="#s-basic"/></svg><a href="#">基本设置...</a></li>
                    </ul>
                    <ul>
                        <li><a href="#">查看应用程序</a></li>
                        <li><a href="#">查看虚拟目录</a></li>
                    </ul>
                    <div class="sub-title">
                        <h3>管理网站</h3>
                        <button type="button" aria-label="折叠"><svg width="16" height="16"><circle cx="8" cy="8" r="7.500" fill="#f4f4f4" stroke="#8c8c8c"/><path d="M5 9.500l3-3 3 3" fill="none" stroke="#222" stroke-width="2"/></svg></button>
                    </div>
                    <ul class="after-title">
                        <li><svg class="ico16"><use href="#s-restart"/></svg><a href="#">重新启动</a></li>
                        <li><svg class="ico16"><use href="#s-play"/></svg><span class="off">启动</span></li>
                        <li><svg class="ico16"><use href="#s-square"/></svg><a href="#">停止</a></li>
                    </ul>
                    <ul>
                        <li><h4>浏览网站</h4></li>
                        <li><svg class="ico16"><use href="#s-site"/></svg><a href="#">浏览 *:8090 (http)</a></li>
                    </ul>
                    <ul>
                        <li><a href="#">高级设置...</a></li>
                    </ul>
                    <ul>
                        <li><h4>配置</h4></li>
                        <li><a href="#">失败请求跟踪...</a></li>
                        <li><a href="#">限制...</a></li>
                        <li><a href="#">HSTS...</a></li>
                    </ul>
                    <ul>
                        <li><a href="#">添加 FTP 发布...</a></li>
                    </ul>
                    <ul>
                        <li><svg class="ico16"><use href="#help"/></svg><a href="#">帮助</a></li>
                    </ul>
                </aside>
            </main>

            <footer class="statusbar">就绪</footer>
        </div>
    </div>

    <div class="taskbar">
        <div class="task-active"></div>
        <div class="clock">17:50</div>
    </div>

    <!-- 输入法浮动条 -->
    <div class="ime">
        <svg class="ime-logo" width="32" height="32" viewBox="0 0 32 32"><path d="M4 4L24 1q3 0 3 3l4 20q0 3-3 4L8 31q-3 0-4-3L1 8q0-3 3-4z" fill="#f0542a"/><path d="M24 8q-13-3-15 2c-1 5 16 3 15 8-1 5-10 6-16 3" fill="none" stroke="#fff" stroke-width="4"/></svg>
        <b>英</b>
        <svg width="13" height="14"><circle cx="3" cy="4" r="2" fill="#0a6fd6"/><path d="M8 8h4v3l-3 3q1-2-1-3z" fill="#0a6fd6"/></svg>
        <svg width="15" height="15"><circle cx="7.500" cy="7.500" r="7.500" fill="#0a6fd6"/><circle cx="5" cy="5.500" r="1.300" fill="#fff"/><circle cx="10" cy="5.500" r="1.300" fill="#fff"/><path d="M3.500 8.500h8q-1 4-4 4t-4-4z" fill="#fff"/></svg>
        <svg width="15" height="12"><rect x=".5" y=".5" width="14" height="11" rx="1.500" fill="#fff" stroke="#0a6fd6"/><path d="M3 3.500h9M3 6h9" stroke="#0a6fd6" stroke-width="1.500" stroke-dasharray="1.500 1"/><path d="M4 9h7" stroke="#0a6fd6" stroke-width="1.500"/></svg>
        <svg width="14" height="14"><g fill="#0a6fd6"><rect width="6" height="6" rx="1.500"/><rect y="7" width="6" height="6" rx="1.500"/><rect x="7" y="7" width="6" height="6" rx="1.500"/></g><circle cx="10" cy="3" r="2.200" fill="none" stroke="#0a6fd6" stroke-width="1.500"/></svg>
    </div>
</body>
</html>
```
FILE: styles.css
```
* {
    box-sizing: border-box;
}
body {
    margin: 0;
    height: 100vh;
    display: flex;
    flex-direction: column;
    overflow: hidden;
    background: #f7f7f7;
    color: #000;
    font-family: "Noto Sans", "Noto Sans CJK SC", sans-serif;
    font-size: 12px;
    line-height: 17px;
}
h1, h2, h3, h4, ul {
    margin: 0;
    padding: 0;
    font-size: 12px;
    list-style: none;
}
button, input, select {
    margin: 0;
    padding: 0;
    border: 0;
    background: none;
    font: inherit;
    color: inherit;
}
a {
    color: inherit;
    text-decoration: none;
}
svg {
    display: block;
    flex: none;
}
.sprite {
    position: absolute;
}
.ico8 {
    width: 8px;
    height: 8px;
}
.ico16 {
    width: 16px;
    height: 16px;
}
.ico32 {
    width: 32px;
    height: 32px;
}

/* svg text */
.t404, .tab-ab, .tcgi, .tdav {
    text-anchor: middle;
}
.t404 {
    font-size: 9px;
    font-weight: bold;
}
.tcgi {
    font-family: "DejaVu Sans Mono", monospace;
    font-size: 12px;
    font-weight: bold;
    fill: #fff;
}
.tdav {
    font-size: 9px;
}
.tab-ab {
    font-family: "Liberation Serif", serif;
    font-size: 14px;
    font-weight: bold;
    fill: #a3161a;
}

.screen {
    flex: 1;
    min-height: 0;
    display: flex;
}

/* left edge */
.edge {
    width: 8px;
    display: flex;
    flex-direction: column;
    background: #f0f0f0;
}
.edge-dark {
    height: 30px;
    background: #3b3c40;
}
.edge-light {
    height: 63px;
    background: #fff;
    border-bottom: 1px solid #e0e0e0;
}
.edge-track {
    flex: 1;
    padding-top: 593px;
}
.edge-thumb {
    width: 6px;
    height: 43px;
    background: #c1c1c1;
}

.app {
    flex: 1;
    min-width: 0;
    display: flex;
    flex-direction: column;
}

/* title bar */
.titlebar {
    height: 23px;
    display: flex;
    align-items: center;
    padding: 0 2px;
    background: #000;
    color: #fff;
}
.titlebar h1 {
    flex: 1;
    padding-left: 5px;
    font-weight: normal;
}
.win-btn {
    width: 46px;
    height: 20px;
    display: flex;
    align-items: center;
    justify-content: center;
}

/* address bar */
.navbar {
    height: 33px;
    display: flex;
    align-items: center;
    padding: 0 5px 2px 4px;
    background: #b9d1ea;
    border-bottom: 1px solid #a9bfd6;
}
.backfwd {
    margin-right: 20px;
}
.crumbs {
    flex: 1;
    height: 23px;
    display: flex;
    align-items: center;
    gap: 11px;
    padding-left: 5px;
    background: #e9f1fa;
    border: 1px solid #9cb2c9;
}
.crumbs .ico16 {
    margin-right: -5px;
}
.nav-tools {
    display: flex;
    align-items: center;
    gap: 7px;
    padding-left: 8px;
}
.nav-help {
    display: flex;
    align-items: center;
    gap: 4px;
    padding-left: 4px;
    border-left: 2px solid #e3edf7;
}

/* menu */
.menubar {
    height: 25px;
    display: flex;
    padding-left: 3px;
    background: linear-gradient(#fcfcfc, #e5e3e4);
}
.menubar button {
    padding: 0 11px;
}

.work {
    flex: 1;
    min-height: 0;
    display: flex;
    gap: 6px;
    padding: 1px 1px 2px;
}
.panel {
    background: #fff;
    border: 1px solid #929297;
}
.panel-title {
    height: 25px;
    padding-left: 7px;
    background: #bcb9bc;
    font-weight: bold;
    line-height: 25px;
}
.sep {
    width: 2px;
    background: #c9c7ba;
}

/* connections */
.connections {
    width: 266px;
    display: flex;
    flex-direction: column;
}
.conn-tools {
    height: 25px;
    display: flex;
    align-items: center;
    gap: 8px;
    padding-left: 2px;
    background: linear-gradient(#fcfcfc, #e5e3e4);
    border-bottom: 1px solid #43446c;
}
.conn-tools .sep {
    height: 15px;
}
.tree {
    flex: 1;
    overflow: hidden;
}
.tree ul {
    padding-left: 19px;
}
.node {
    height: 20px;
    display: flex;
    white-space: nowrap;
}
.twisty svg {
    width: 21px;
    height: 20px;
}
.label {
    display: flex;
    align-items: center;
    gap: 4px;
    padding: 0 4px 0 2px;
}
.label.selected {
    background: #d9d9d9;
}
.hscroll {
    height: 15px;
    display: flex;
    background: #f0f0f0;
}
.hscroll-track {
    flex: 1;
}
.hscroll-thumb {
    width: 88%;
    height: 15px;
    background: #cdcdcd;
}

/* center */
.center {
    flex: 1;
    min-width: 0;
    display: flex;
    flex-direction: column;
}
.home {
    flex: 1;
    display: flex;
    flex-direction: column;
    padding: 12px 12px 11px;
}
.home-title {
    height: 40px;
    display: flex;
    gap: 18px;
}
.home-title h2 {
    font-size: 20px;
    font-weight: normal;
    line-height: 26px;
}
.features {
    flex: 1;
    border: 1px solid #dfdfe3;
}
.toolbar {
    height: 31px;
    display: flex;
    align-items: center;
    padding-left: 6px;
    background: linear-gradient(#fcfcfc, #e0dedf);
    border-bottom: 1px solid #43446c;
}
.toolbar button {
    display: flex;
    align-items: center;
    gap: 4px;
}
.toolbar .sep {
    height: 20px;
    margin: 0 5px 0 10px;
}
.combo {
    height: 25px;
    display: flex;
    align-items: center;
    padding: 0 3px;
    background: #fff;
}
.combo input, .combo select {
    flex: 1;
    min-width: 0;
    appearance: none;
    outline: 0;
}
.combo-filter {
    width: 122px;
    margin: 0 4px 0 6px;
}
.combo-group {
    width: 115px;
    margin: 0 3px 0 6px;
}
.toolbar .go {
    color: #8d8d8d;
    margin-right: 4px;
}
.go .ico8 {
    margin-left: 4px;
}

.group {
    padding-bottom: 6px;
}
.group h3 {
    height: 22px;
    display: flex;
    align-items: center;
    gap: 5px;
    padding: 0 8px 0 12px;
    color: #1e3287;
    font-weight: normal;
}
.group h3::after {
    content: "";
    flex: 1;
    height: 1px;
    background: #b0bbd8;
}
.group h3 button {
    order: 1;
    padding-left: 3px;
}
.items {
    display: grid;
    grid-template-columns: repeat(auto-fill, 73px);
    grid-auto-rows: 73px;
    gap: 2px;
    align-items: start;
}
.item {
    padding-top: 2px;
    text-align: center;
    border: 1px solid transparent;
}
.item .ico32 {
    margin: 0 auto 3px;
}
.item.selected {
    background: #cce8ff;
    border: 1px dotted #333;
    outline: 1px solid #99d1ff;
}

.tabs {
    height: 28px;
    display: flex;
    align-items: center;
    gap: 2px;
    padding-left: 6px;
}
.tab {
    display: flex;
    align-items: center;
    gap: 3px;
}
.tab.active {
    height: 21px;
    padding: 0 6px 0 1px;
    border: 1px solid #0078d7;
}

/* actions */
.actions {
    width: 200px;
    background: linear-gradient(90deg, #fcfcfc, #ebebeb);
}
.actions ul {
    padding-top: 5px;
    margin: 0 3px 0 2px;
    background: linear-gradient(90deg, transparent, #8c8c8c 50%) 0 2px / 100% 1px no-repeat;
}
.actions ul.first {
    background: none;
}
.actions ul.after-title {
    padding-top: 0;
    background: none;
}
.actions li {
    height: 20px;
    display: grid;
    grid-template-columns: 16px auto;
    justify-content: start;
    align-items: center;
    column-gap: 8px;
    padding-left: 3px;
    line-height: 20px;
}
.actions li > :last-child {
    grid-column: 2;
}
.actions a {
    color: #3c96d8;
}
.actions .off {
    color: #9b9b9b;
}
.sub-title {
    height: 30px;
    display: flex;
    align-items: center;
    justify-content: space-between;
    padding: 5px 9px 0 7px;
    margin-right: 3px;
    background:
        linear-gradient(90deg, transparent, #8c8c8c 50%) 2px 2px / 100% 1px no-repeat,
        linear-gradient(90deg, #dedede, #fafafa) 0 5px / 100% 25px no-repeat;
}

.statusbar {
    height: 23px;
    padding-left: 5px;
    background: linear-gradient(90deg, #e4e2e3, #f7f7f7);
    line-height: 23px;
}

/* taskbar */
.taskbar {
    height: 8px;
    display: flex;
    justify-content: space-between;
    overflow: hidden;
    padding: 0 75px 0 449px;
    background: #1a1f28;
    color: #fff;
}
.task-active {
    width: 48px;
    background: #33363c;
}
.clock {
    padding-top: 2px;
}

/* ime */
.ime {
    position: absolute;
    right: 0;
    bottom: 8px;
    height: 26px;
    display: flex;
    align-items: center;
    gap: 9px;
    padding-right: 6px;
    background: #fff;
    border-top: 1px solid #b5cdf0;
    color: #0a6fd6;
    font-size: 15px;
}
.ime-logo {
    margin: -6px 0 0 -8px;
}
```
